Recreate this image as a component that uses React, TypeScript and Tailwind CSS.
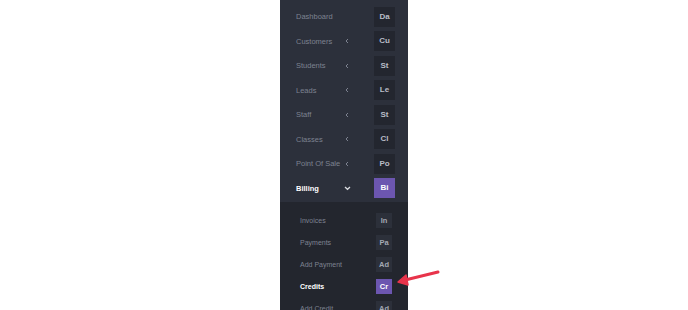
import React from 'react';

type Item = { label: string; short: string; chevron?: 'left' | 'down'; active?: boolean };

const mainItems: Item[] = [
  { label: 'Dashboard', short: 'Da' },
  { label: 'Customers', short: 'Cu', chevron: 'left' },
  { label: 'Students', short: 'St', chevron: 'left' },
  { label: 'Leads', short: 'Le', chevron: 'left' },
  { label: 'Staff', short: 'St', chevron: 'left' },
  { label: 'Classes', short: 'Cl', chevron: 'left' },
  { label: 'Point Of Sale', short: 'Po', chevron: 'left' },
  { label: 'Billing', short: 'Bi', chevron: 'down', active: true },
];

const subItems: Item[] = [
  { label: 'Invoices', short: 'In' },
  { label: 'Payments', short: 'Pa' },
  { label: 'Add Payment', short: 'Ad' },
  { label: 'Credits', short: 'Cr', active: true },
  { label: 'Add Credit', short: 'Ad' },
];

const Chevron: React.FC<{ dir: 'left' | 'down' }> = ({ dir }) =>
  dir === 'left' ? (
    <svg width="6" height="6" viewBox="0 0 6 6" className="text-[#7d8290]">
      <path d="M4 1 L2 3 L4 5" fill="none" stroke="currentColor" strokeWidth="1" />
    </svg>
  ) : (
    <svg width="7" height="6" viewBox="0 0 7 6" className="text-[#d9dbe0]">
      <path d="M1 2 L3.5 4.3 L6 2" fill="none" stroke="currentColor" strokeWidth="1.3" />
    </svg>
  );

const App: React.FC = () => {
  return (
    <div className="w-[688px] h-[310px] bg-white overflow-hidden" style={{ fontFamily: '"Liberation Sans", Arial, sans-serif' }}>
      <div className="ml-[280px] w-[128px] h-[310px] bg-[#2c303b] flex flex-col">
        {/* main menu */}
        <div className="pt-[4.5px] pb-[1.5px]">
          {mainItems.map((it) => (
            <div key={it.label} className="h-[24.5px] flex items-center pl-[16px] pr-[13px]">
              <span className={`w-[48px] whitespace-nowrap text-[7.5px] leading-none ${it.active ? 'text-white font-bold' : 'text-[#7d8290]'}`}>
                {it.label}
              </span>
              <span className="w-[8px] flex items-center">{it.chevron && <Chevron dir={it.chevron} />}</span>
              <div
                className={`ml-auto w-[21px] h-[20px] flex items-center justify-center text-[8px] font-bold leading-none ${
                  it.active ? 'bg-[#6c56b0] text-white' : 'bg-[#23262f] text-[#b9bdc7]'
                }`}
              >
                {it.short}
              </div>
            </div>
          ))}
        </div>

        {/* billing submenu */}
        <div className="flex-1 bg-[#23262e] pt-[7.5px]">
          {subItems.map((it, i) => (
            <div key={i} className="h-[22px] flex items-center pl-[20px] pr-[16px]">
              <span className={`whitespace-nowrap text-[7px] leading-none ${it.active ? 'text-white font-bold' : 'text-[#7d8290]'}`}>
                {it.label}
              </span>
              <div
                className={`ml-auto relative w-[16px] h-[15px] flex items-center justify-center text-[7.5px] font-bold leading-none ${
                  it.active ? 'bg-[#6c56b0] text-white' : 'bg-[#2c303a] text-[#a3a8b3]'
                }`}
              >
                {it.short}
                {it.active && (
                  <svg className="absolute left-[20px] top-[-12px]" width="46" height="22" viewBox="0 0 46 22">
                    <path d="M42 5 L5 14" stroke="#e8344b" strokeWidth="3" strokeLinecap="round" fill="none" />
                    <path d="M2 15 L10 8 L12 18 Z" fill="#e8344b" stroke="#e8344b" strokeWidth="1.5" strokeLinejoin="round" />
                  </svg>
                )}
              </div>
            </div>
          ))}
        </div>
      </div>
    </div>
  );
};

export default App;
